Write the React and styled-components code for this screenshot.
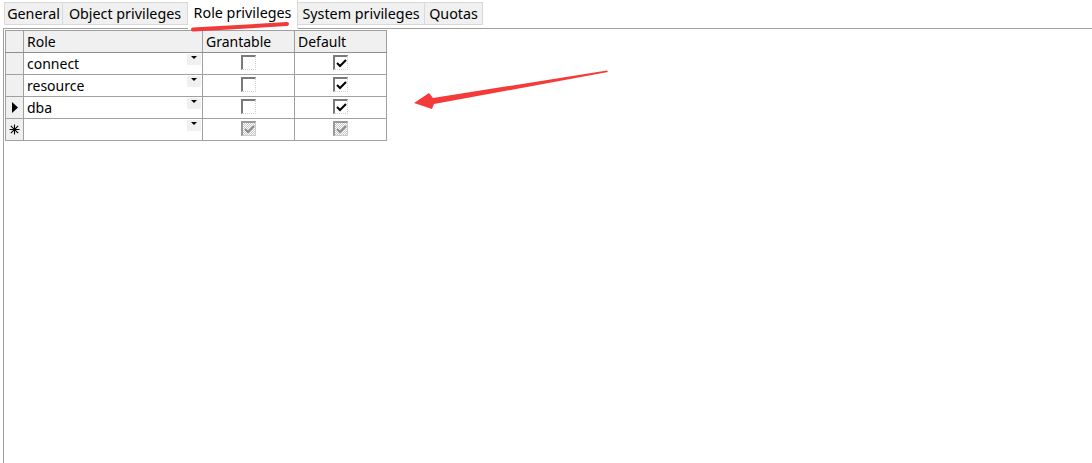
import React from 'react'
import styled, { createGlobalStyle, css } from 'styled-components'

const GlobalStyle = createGlobalStyle`
  html, body {
    margin: 0;
    padding: 0;
    background: #fff;
  }
  body {
    font-family: 'Noto Sans', 'Open Sans', sans-serif;
    font-size: 14px;
    color: #000;
  }
`

const Page = styled.div`
  position: relative;
  width: 1092px;
  height: 463px;
  overflow: hidden;
  display: flex;
  flex-direction: column;
`

const TabStrip = styled.div`
  display: flex;
  height: 28px;
  padding-left: 4px;
  position: relative;
  z-index: 1;
`

const Tab = styled.div`
  box-sizing: border-box;
  width: ${p => p.width}px;
  height: 23px;
  margin-top: 2px;
  display: flex;
  align-items: center;
  justify-content: center;
  white-space: nowrap;
  font-size: 14.3px;
  background: #f0f0f0;
  border: 1px solid #d9d9d9;
  border-left: none;
  &:first-child {
    border-left: 1px solid #d9d9d9;
  }
  ${p =>
    p.active &&
    css`
      height: 29px;
      margin-top: 0;
      padding-bottom: 5px;
      background: #fff;
      border-bottom: none;
      border-top: none;
    `}
`

const Panel = styled.div`
  flex: 1;
  margin-left: 3px;
  border-top: 1px solid #a0a0a0;
  border-left: 1px solid #a0a0a0;
  padding: 1px 0 0 1px;
`

const Grid = styled.table`
  border-collapse: collapse;
  table-layout: fixed;
  font-size: 14px;
`

const Col = styled.col`
  width: ${p => p.w}px;
`

const Th = styled.th`
  box-sizing: border-box;
  height: 22px;
  padding: 0 0 0 3px;
  font-weight: normal;
  text-align: left;
  background: #f0f0f0;
  border: 1px solid #a0a0a0;
  border-bottom-color: #8e8e8e;
`

const Td = styled.td`
  box-sizing: border-box;
  height: 22px;
  padding: 0;
  border: 1px solid #a0a0a0;
  vertical-align: top;
  background: ${p => (p.indicator ? '#f0f0f0' : '#fff')};
`

const Indicator = styled.div`
  height: 21px;
  display: flex;
  align-items: center;
  justify-content: center;
`

const RoleCell = styled.div`
  height: 21px;
  display: flex;
  justify-content: space-between;
  padding-left: 3px;
  padding-right: 1px;
`

const RoleText = styled.span`
  align-self: center;
`

const DropButton = styled.span`
  width: 14px;
  height: 11px;
  margin-top: 1px;
  background: #f0f0f0;
  display: flex;
  justify-content: center;
  padding-top: 2px;
  box-sizing: border-box;
  &::after {
    content: '';
    width: 0;
    height: 0;
    border-left: 3px solid transparent;
    border-right: 3px solid transparent;
    border-top: 3px solid #000;
  }
`

const CheckCell = styled.div`
  height: 21px;
  display: flex;
  justify-content: center;
  padding-top: 2px;
  box-sizing: border-box;
`

const Box = styled.span`
  box-sizing: border-box;
  width: 15px;
  height: 15px;
  border-top: 2px solid #7a7a7a;
  border-left: 2px solid #7a7a7a;
  border-right: 1px dotted #cfcfcf;
  border-bottom: 1px dotted #cfcfcf;
  display: flex;
  align-items: center;
  justify-content: center;
  ${p =>
    p.disabled &&
    css`
      border-top-color: #999;
      border-left-color: #999;
      background-color: #fff;
      background-image: repeating-conic-gradient(#c8c8c8 0 25%, #fff 0 50%);
      background-size: 2px 2px;
    `}
`

const Check = ({ color }) => (
  <svg width="11" height="9" viewBox="0 0 11 9">
    <path d="M1 4 L4 7 L10 1" fill="none" stroke={color} strokeWidth="2" />
  </svg>
)

const CheckBox = ({ checked, disabled }) => (
  <CheckCell>
    <Box disabled={disabled}>
      {checked && <Check color={disabled ? '#8a8a8a' : '#000'} />}
    </Box>
  </CheckCell>
)

const Overlay = styled.svg`
  position: absolute;
  left: 0;
  top: 0;
  pointer-events: none;
  z-index: 5;
`

const rows = [
  { role: 'connect', grantable: false, def: true },
  { role: 'resource', grantable: false, def: true },
  { role: 'dba', grantable: false, def: true, current: true }
]

const tabs = [
  { label: 'General', width: 59 },
  { label: 'Object privileges', width: 125 },
  { label: 'Role privileges', width: 110, active: true },
  { label: 'System privileges', width: 127 },
  { label: 'Quotas', width: 58 }
]

export default function App() {
  return (
    <Page>
      <GlobalStyle />
      <TabStrip>
        {tabs.map(t => (
          <Tab key={t.label} width={t.width} active={t.active}>
            {t.label}
          </Tab>
        ))}
      </TabStrip>
      <Panel>
        <Grid>
          <colgroup>
            <Col w={18} />
            <Col w={179} />
            <Col w={92} />
            <Col w={92} />
          </colgroup>
          <thead>
            <tr>
              <Th />
              <Th>Role</Th>
              <Th>Grantable</Th>
              <Th>Default</Th>
            </tr>
          </thead>
          <tbody>
            {rows.map(r => (
              <tr key={r.role}>
                <Td indicator>
                  <Indicator>
                    {r.current && (
                      <svg width="6" height="11" viewBox="0 0 6 11">
                        <path d="M0 0 L6 5.5 L0 11 Z" fill="#000" />
                      </svg>
                    )}
                  </Indicator>
                </Td>
                <Td>
                  <RoleCell>
                    <RoleText>{r.role}</RoleText>
                    <DropButton />
                  </RoleCell>
                </Td>
                <Td>
                  <CheckBox checked={r.grantable} />
                </Td>
                <Td>
                  <CheckBox checked={r.def} />
                </Td>
              </tr>
            ))}
            <tr>
              <Td indicator>
                <Indicator>
                  <svg width="11" height="11" viewBox="0 0 11 11">
                    <path
                      d="M5.5 0.5 V10.5 M0.5 5.5 H10.5 M1.8 1.8 L9.2 9.2 M9.2 1.8 L1.8 9.2"
                      stroke="#000"
                      strokeWidth="1.1"
                    />
                  </svg>
                </Indicator>
              </Td>
              <Td>
                <RoleCell>
                  <RoleText />
                  <DropButton />
                </RoleCell>
              </Td>
              <Td>
                <CheckBox checked disabled />
              </Td>
              <Td>
                <CheckBox checked disabled />
              </Td>
            </tr>
          </tbody>
        </Grid>
      </Panel>
      <Overlay width="1092" height="463">
        <path
          d="M193 29.5 Q 240 27 287 24"
          fill="none"
          stroke="#f23a3a"
          strokeWidth="4"
          strokeLinecap="round"
        />
        <polygon
          points="607,70.5 608,72 434,104 432,109 414,103 429,93 433,98"
          fill="#f53a3a"
        />
      </Overlay>
    </Page>
  )
}
